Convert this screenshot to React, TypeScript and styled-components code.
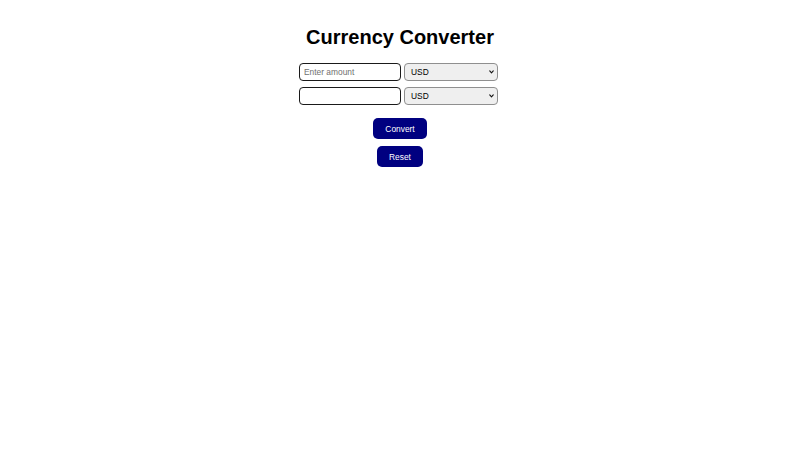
import React, { useState } from "react";
import styled, { createGlobalStyle } from "styled-components";

const Global = createGlobalStyle`
  html, body { margin: 0; padding: 0; background: #ffffff; }
  body { font-family: "Liberation Sans", Arial, sans-serif; }
`;

const Page = styled.main`
  display: flex;
  flex-direction: column;
  align-items: center;
  padding-top: 26px;
`;

const Title = styled.h1`
  margin: 0 0 14px;
  font-size: 20px;
  line-height: 23px;
  font-weight: 700;
  color: #000;
`;

const Row = styled.div`
  display: flex;
  align-items: flex-start;
  gap: 3px;
  padding-right: 3px;
  margin-bottom: 6px;
`;

const AmountInput = styled.input`
  display: block;
  box-sizing: border-box;
  width: 102px;
  height: 18px;
  margin: 0;
  padding: 0 4px;
  border: 1.5px solid #1a1a1a;
  border-radius: 4px;
  font-family: "Liberation Sans", Arial, sans-serif;
  font-size: 8.4px;
  color: #000;
  background: #fff;
  outline: none;
  &::placeholder { color: #707070; }
`;

const SelectWrap = styled.div`
  position: relative;
  width: 94px;
  height: 18px;
`;

const CurrencySelect = styled.select`
  display: block;
  appearance: none;
  -webkit-appearance: none;
  box-sizing: border-box;
  width: 100%;
  height: 100%;
  margin: 0;
  padding: 0 0 0 6px;
  border: 1px solid #8f8f8f;
  border-radius: 4px;
  background-color: #efefef;
  font-family: "Liberation Sans", Arial, sans-serif;
  font-size: 8.4px;
  color: #000;
  outline: none;
`;

const Chevron = styled.svg`
  position: absolute;
  right: 4px;
  top: 7px;
  width: 5px;
  height: 4px;
  pointer-events: none;
`;

const Actions = styled.div`
  display: flex;
  flex-direction: column;
  align-items: center;
  gap: 7px;
  margin-top: 7px;
`;

const ActionButton = styled.button`
  box-sizing: border-box;
  height: 21px;
  padding: 0 12.5px;
  border: none;
  border-radius: 5px;
  background: #000080;
  color: #fff;
  font-family: "Liberation Sans", Arial, sans-serif;
  font-size: 8.4px;
  cursor: pointer;
`;

const currencies = ["USD", "EUR", "GBP", "JPY", "INR"];

function CurrencyPicker({ value, onChange }: { value: string; onChange: (v: string) => void }) {
  return (
    <SelectWrap>
      <CurrencySelect value={value} onChange={(e) => onChange(e.target.value)}>
        {currencies.map((c) => (
          <option key={c}>{c}</option>
        ))}
      </CurrencySelect>
      <Chevron viewBox="0 0 10 8">
        <path d="M1.5 1.8 L5 5.6 L8.5 1.8" fill="none" stroke="#111" strokeWidth="2.2" strokeLinecap="round" strokeLinejoin="round" />
      </Chevron>
    </SelectWrap>
  );
}

export default function App() {
  const [amount, setAmount] = useState("");
  const [from, setFrom] = useState("USD");
  const [to, setTo] = useState("USD");
  const [result, setResult] = useState("");

  return (
    <>
      <Global />
      <Page>
        <Title>Currency Converter</Title>
        <Row>
          <AmountInput
            placeholder="Enter amount"
            value={amount}
            onChange={(e) => setAmount(e.target.value)}
          />
          <CurrencyPicker value={from} onChange={setFrom} />
        </Row>
        <Row>
          <AmountInput readOnly value={result} />
          <CurrencyPicker value={to} onChange={setTo} />
        </Row>
        <Actions>
          <ActionButton onClick={() => setResult(amount)}>Convert</ActionButton>
          <ActionButton
            onClick={() => {
              setAmount("");
              setResult("");
            }}
          >
            Reset
          </ActionButton>
        </Actions>
      </Page>
    </>
  );
}
